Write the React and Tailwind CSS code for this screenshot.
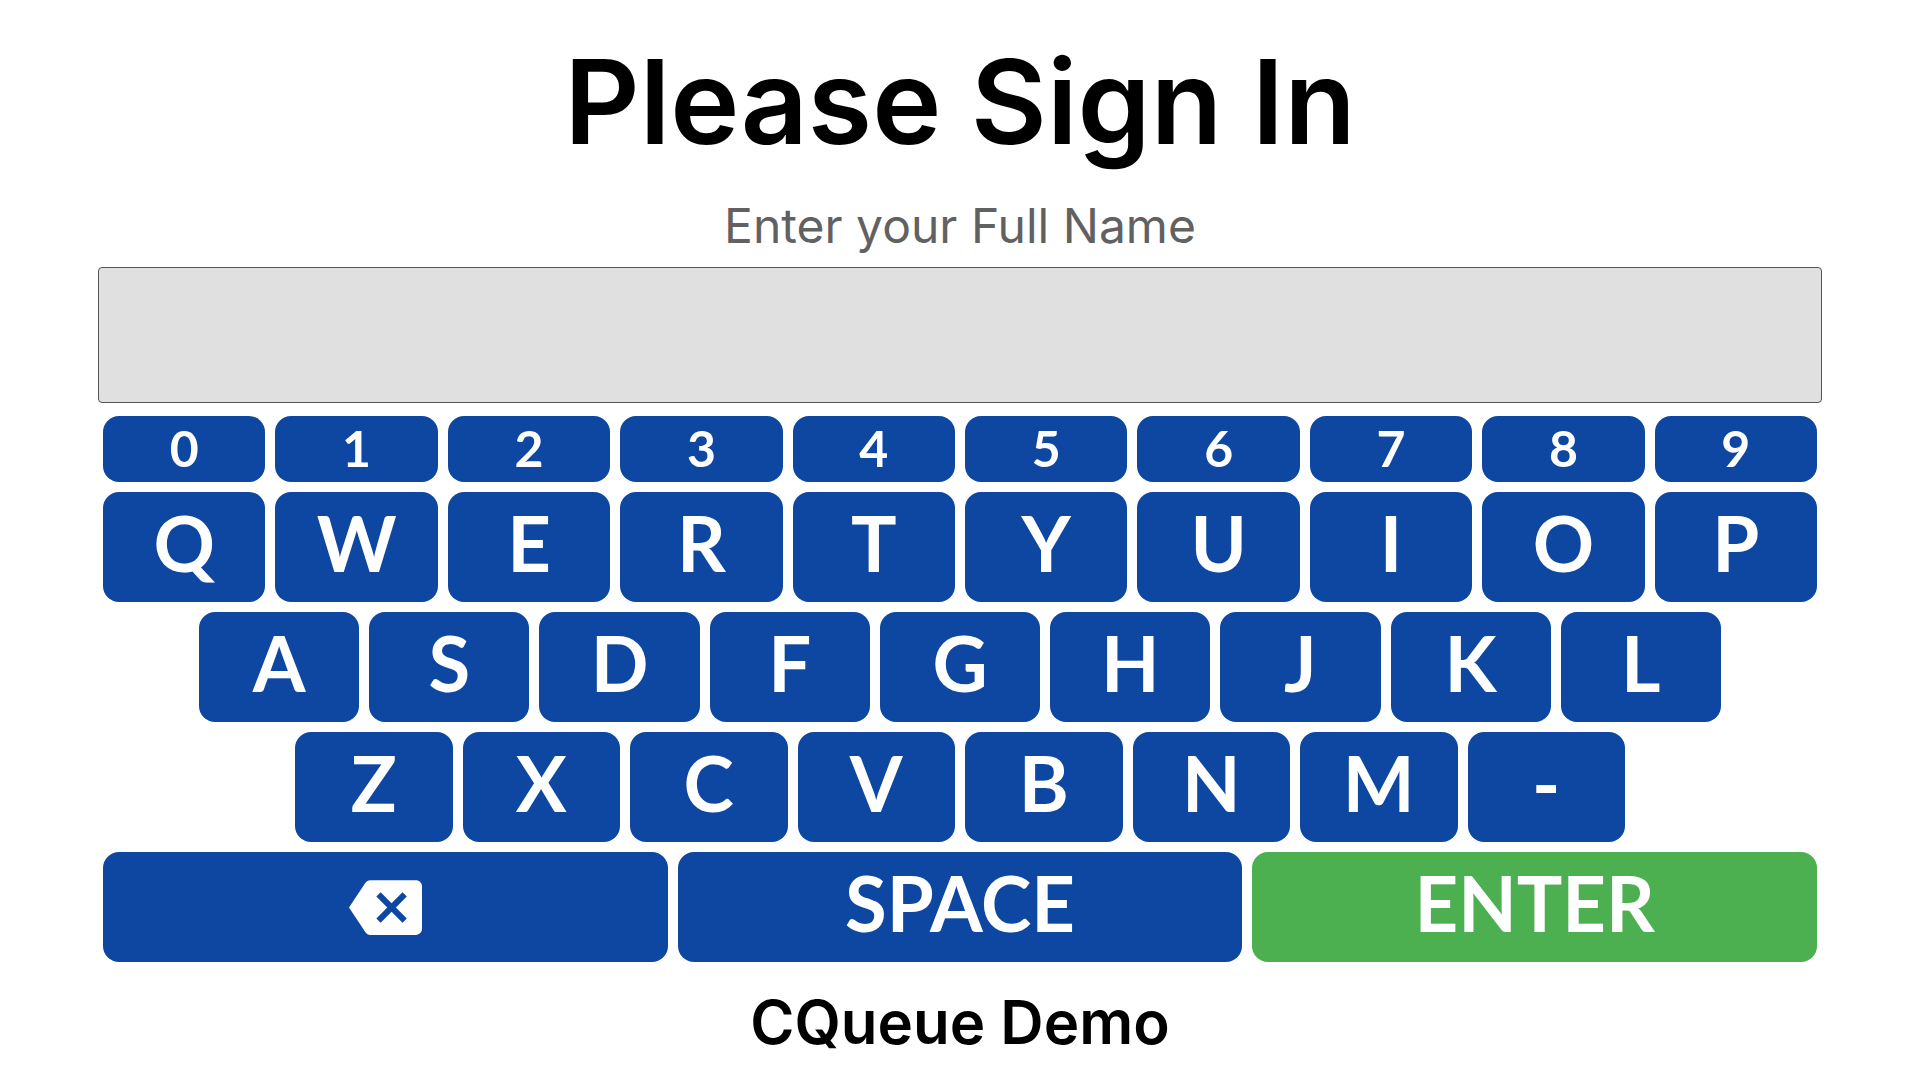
import { useState } from "react";
import { MdBackspace } from "react-icons/md";
import clsx from "clsx";

const rows = [
  { keys: "QWERTYUIOP", className: "px-[5px]" },
  { keys: "ASDFGHJKL", className: "px-[101px]" },
  { keys: "ZXCVBNM-", className: "px-[197px]" },
];

const Key = ({ className = "h-[110px] pb-2 text-[76px]", color = "bg-[#0d47a1]", children, ...props }) => (
  <button
    type="button"
    className={clsx("flex min-w-0 flex-1 items-center justify-center rounded-2xl font-['Lato',sans-serif] font-bold leading-none text-white", color, className)}
    {...props}
  >
    {children}
  </button>
);

export default function App() {
  const [name, setName] = useState("");

  const press = (char) => () => setName((n) => n + char);
  const backspace = () => setName((n) => n.slice(0, -1));

  const submit = (e) => {
    e.preventDefault();
    setName("");
  };

  return (
    <main className="min-h-screen bg-white px-[98px] pt-8 font-['Inter',sans-serif]">
      <h1 className="text-center text-[117px] font-semibold leading-[140px] text-black">Please Sign In</h1>

      <form onSubmit={submit}>
        <label htmlFor="full-name" className="mt-6 block text-center text-[48px] leading-[60px] text-[#616161]">
          Enter your Full Name
        </label>
        <input
          id="full-name"
          value={name}
          onChange={(e) => setName(e.target.value)}
          autoComplete="off"
          className="mt-[11px] block h-[136px] w-full rounded-sm border border-[#555555] bg-[#e0e0e0] text-center text-[76px] text-black outline-none"
        />

        <div className="mt-[13px] flex flex-col gap-[10px]">
          <div className="flex gap-[10px] px-[5px]">
            {"0123456789".split("").map((char) => (
              <Key key={char} className="h-[66px] pb-0.5 text-[50px]" onClick={press(char)}>{char}</Key>
            ))}
          </div>
          {rows.map((row) => (
            <div key={row.keys} className={clsx("flex gap-[10px]", row.className)}>
              {row.keys.split("").map((char) => (
                <Key key={char} onClick={press(char)}>{char}</Key>
              ))}
            </div>
          ))}
          <div className="flex gap-[10px] px-[5px]">
            <Key className="h-[110px]" onClick={backspace} aria-label="Backspace"><MdBackspace size={73} /></Key>
            <Key onClick={press(" ")}>SPACE</Key>
            <Key type="submit" color="bg-[#4caf50]">ENTER</Key>
          </div>
        </div>
      </form>

      <p className="mt-6 text-center text-[60px] font-semibold leading-[72px] text-black">CQueue Demo</p>
    </main>
  );
}
